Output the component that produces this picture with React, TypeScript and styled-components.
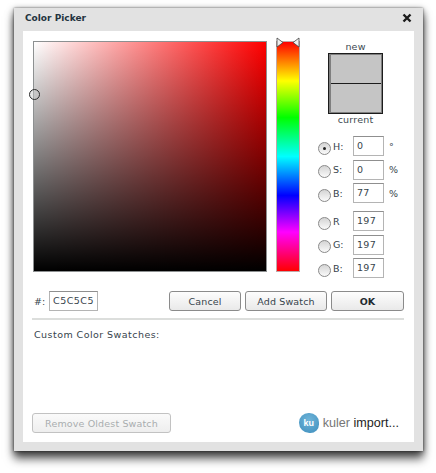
import * as React from "react";
import styled, { createGlobalStyle } from "styled-components";

const GlobalStyle = createGlobalStyle`
    html, body {
        margin: 0;
        background: #fff;
        font-family: "DejaVu Sans", sans-serif;
    }
`;

const Page = styled.div`
    width: 436px;
    height: 473px;
    padding: 8px 13px 0 14px;
    box-sizing: border-box;
    overflow: hidden;
`;

const Dialog = styled.div`
    width: 409px;
    height: 443px;
    box-sizing: border-box;
    padding: 0 9px 9px 9px;
    background: #e2e2e2;
    box-shadow: 0 8px 9px rgba(0, 0, 0, 0.6), 0 2px 7px rgba(0, 0, 0, 0.55), 0 0 2px rgba(0, 0, 0, 0.5);
    display: flex;
    flex-direction: column;
`;

const TitleBar = styled.div`
    height: 23px;
    flex: none;
    display: flex;
    align-items: center;
    justify-content: space-between;
    padding: 0 0 4px 2px;
    box-sizing: border-box;
`;

const Title = styled.div`
    font-size: 9px;
    font-weight: bold;
    color: #24343f;
`;

const CloseIcon = styled.svg`
    width: 10px;
    height: 10px;
    margin-right: 2px;
`;

const Body = styled.div`
    flex: 1;
    background: #fff;
    padding: 10px 10px 9px 9px;
    display: flex;
    flex-direction: column;
    min-height: 0;
`;

const TopRow = styled.div`
    display: flex;
    height: 241px;
    padding-left: 1px;
`;

const Field = styled.div`
    position: relative;
    width: 234px;
    height: 231px;
    box-sizing: border-box;
    border: 1px solid #8d9091;
    background:
        linear-gradient(to bottom, rgba(0, 0, 0, 0), #000),
        linear-gradient(to right, #fff, #f00);
`;

const FieldMarker = styled.div`
    position: absolute;
    left: -5px;
    top: 47px;
    width: 11px;
    height: 11px;
    box-sizing: border-box;
    border: 1px solid #2c2c2c;
    border-radius: 50%;
    background: rgba(200, 200, 200, 0.45);
`;

const HueBar = styled.div`
    position: relative;
    width: 24px;
    height: 231px;
    margin-left: 9px;
    box-sizing: border-box;
    border: 1px solid #c0a8a8;
    background: linear-gradient(
        to bottom,
        #f00 0%,
        #ff0 17%,
        #0f0 33%,
        #0ff 50%,
        #00f 67%,
        #f0f 83%,
        #f00 100%
    );
`;

const HueArrow = styled.svg<{ $side: "left" | "right" }>`
    position: absolute;
    top: -5px;
    width: 8px;
    height: 11px;
    ${(p) => (p.$side === "left" ? "left: -1px;" : "right: -1px;")}
`;

const SideColumn = styled.div`
    width: 84px;
    margin-left: 19px;
    display: flex;
    flex-direction: column;
`;

const SwatchBlock = styled.div`
    display: flex;
    flex-direction: column;
    align-items: center;
    width: 55px;
    margin-left: 9px;
    color: #3d4a52;
    font-size: 9.5px;
    letter-spacing: 0.2px;
`;

const SwatchLabel = styled.div`
    height: 12px;
    line-height: 12px;
`;

const SwatchFrame = styled.div`
    width: 55px;
    height: 61px;
    box-sizing: border-box;
    border: 1px solid #1c1c1c;
    padding: 1px 1px 1px 2px;
    display: flex;
    flex-direction: column;
    background: #7f7f7f;
`;

const SwatchPart = styled.div<{ $split?: boolean }>`
    flex: 1;
    background: #c5c5c5;
    ${(p) => p.$split && "border-bottom: 1px solid #1c1c1c;"}
`;

const ChannelGroup = styled.div<{ $top: number }>`
    margin-top: ${(p) => p.$top}px;
    display: flex;
    flex-direction: column;
    gap: 3.5px;
`;

const ChannelRow = styled.div`
    display: flex;
    align-items: center;
    height: 20px;
`;

const Radio = styled.div<{ $on?: boolean }>`
    width: 13px;
    height: 13px;
    flex: none;
    box-sizing: border-box;
    margin: 4px 0 0 -1px;
    border-radius: 50%;
    border: 1px solid #8a8a8a;
    background: linear-gradient(to bottom, #d4d4d4, #fafafa);
    display: flex;
    align-items: center;
    justify-content: center;
    &::after {
        content: "";
        display: ${(p) => (p.$on ? "block" : "none")};
        width: 3px;
        height: 3px;
        border-radius: 50%;
        background: #222;
    }
`;

const ChannelLabel = styled.div`
    width: 22px;
    padding-left: 2px;
    box-sizing: border-box;
    font-size: 9.5px;
    color: #37444c;
`;

const ValueBox = styled.div`
    width: 31px;
    height: 20px;
    flex: none;
    box-sizing: border-box;
    border: 1px solid #b4b4b4;
    border-top-color: #8f8f8f;
    padding-left: 3px;
    font-size: 9.5px;
    line-height: 17px;
    letter-spacing: 0.3px;
    color: #37444c;
    background: #fff;
`;

const Unit = styled.div`
    margin-left: 5px;
    font-size: 9.5px;
    color: #37444c;
`;

const ActionRow = styled.div`
    display: flex;
    align-items: center;
    height: 20px;
    margin-top: 9px;
`;

const HexLabel = styled.div`
    width: 17px;
    padding-left: 2px;
    box-sizing: border-box;
    font-size: 9.5px;
    color: #37444c;
`;

const HexBox = styled(ValueBox)`
    width: 49px;
    letter-spacing: 0.5px;
`;

const Button = styled.div<{ $w: number; $left: number; $bold?: boolean; $off?: boolean }>`
    width: ${(p) => p.$w}px;
    height: 20px;
    margin-left: ${(p) => p.$left}px;
    box-sizing: border-box;
    flex: none;
    border: 1px solid ${(p) => (p.$off ? "#c2c2c2" : "#8b8b8b")};
    border-radius: 3px;
    background: ${(p) =>
        p.$off ? "linear-gradient(to bottom, #fafafa, #eeeeee)" : "linear-gradient(to bottom, #fdfdfd, #e9e9e9)"};
    display: flex;
    align-items: center;
    justify-content: center;
    font-size: 9.5px;
    letter-spacing: 0.15px;
    font-weight: ${(p) => (p.$bold ? "bold" : "normal")};
    color: ${(p) => (p.$off ? "#a9adaf" : p.$bold ? "#1f2a30" : "#37444c")};
`;

const Divider = styled.div`
    height: 2px;
    width: 372px;
    margin-top: 7px;
    background: #dcdedc;
`;

const SwatchHeading = styled.div`
    margin-top: 9px;
    padding-left: 2px;
    font-size: 9.5px;
    line-height: 12px;
    letter-spacing: 0.45px;
    color: #37444c;
    flex: 1;
`;

const FooterRow = styled.div`
    display: flex;
    align-items: center;
    justify-content: space-between;
    height: 20px;
`;

const KulerLink = styled.div`
    display: flex;
    align-items: center;
    gap: 4px;
    margin-right: 5px;
    font-family: "Liberation Sans", sans-serif;
    font-size: 12.6px;
    color: #767676;
`;

const KulerBadge = styled.div`
    width: 20px;
    height: 20px;
    border-radius: 50% 50% 45% 55%;
    background: radial-gradient(circle at 50% 35%, #6fb4d8, #3f8fbe);
    color: #fff;
    font-size: 9px;
    font-weight: bold;
    display: flex;
    align-items: center;
    justify-content: center;
`;

const KulerStrong = styled.span`
    color: #1d1d1d;
`;

const hsb = [
    { label: "H:", value: "0", unit: "°", on: true },
    { label: "S:", value: "0", unit: "%" },
    { label: "B:", value: "77", unit: "%" },
];

const rgb = [
    { label: "R", value: "197" },
    { label: "G:", value: "197" },
    { label: "B:", value: "197" },
];

export default function App() {
    return (
        <Page>
            <GlobalStyle />
            <Dialog>
                <TitleBar>
                    <Title>Color Picker</Title>
                    <CloseIcon viewBox="0 0 10 10">
                        <path d="M1.5 1.5 L8.5 8.5 M8.5 1.5 L1.5 8.5" stroke="#1c1c1c" strokeWidth="2.4" />
                    </CloseIcon>
                </TitleBar>
                <Body>
                    <TopRow>
                        <Field>
                            <FieldMarker />
                        </Field>
                        <HueBar>
                            <HueArrow $side="left" viewBox="0 0 8 11">
                                <path d="M1 1 L7 5.5 L1 10 Z" fill="#eee" stroke="#444" strokeWidth="0.8" />
                            </HueArrow>
                            <HueArrow $side="right" viewBox="0 0 8 11">
                                <path d="M7 1 L1 5.5 L7 10 Z" fill="#eee" stroke="#444" strokeWidth="0.8" />
                            </HueArrow>
                        </HueBar>
                        <SideColumn>
                            <SwatchBlock>
                                <SwatchLabel>new</SwatchLabel>
                                <SwatchFrame>
                                    <SwatchPart $split />
                                    <SwatchPart />
                                </SwatchFrame>
                                <SwatchLabel>current</SwatchLabel>
                            </SwatchBlock>
                            <ChannelGroup $top={10}>
                                {hsb.map((c) => (
                                    <ChannelRow key={c.label}>
                                        <Radio $on={c.on} />
                                        <ChannelLabel>{c.label}</ChannelLabel>
                                        <ValueBox>{c.value}</ValueBox>
                                        <Unit>{c.unit}</Unit>
                                    </ChannelRow>
                                ))}
                            </ChannelGroup>
                            <ChannelGroup $top={8}>
                                {rgb.map((c) => (
                                    <ChannelRow key={c.label}>
                                        <Radio />
                                        <ChannelLabel>{c.label}</ChannelLabel>
                                        <ValueBox>{c.value}</ValueBox>
                                    </ChannelRow>
                                ))}
                            </ChannelGroup>
                        </SideColumn>
                    </TopRow>
                    <ActionRow>
                        <HexLabel>#:</HexLabel>
                        <HexBox>C5C5C5</HexBox>
                        <Button $w={72} $left={71}>Cancel</Button>
                        <Button $w={82} $left={4}>Add Swatch</Button>
                        <Button $w={73} $left={4} $bold>OK</Button>
                    </ActionRow>
                    <Divider />
                    <SwatchHeading>Custom Color Swatches:</SwatchHeading>
                    <FooterRow>
                        <Button $w={139} $left={0} $off>Remove Oldest Swatch</Button>
                        <KulerLink>
                            <KulerBadge>ku</KulerBadge>
                            <span>
                                kuler <KulerStrong>import...</KulerStrong>
                            </span>
                        </KulerLink>
                    </FooterRow>
                </Body>
            </Dialog>
        </Page>
    );
}
